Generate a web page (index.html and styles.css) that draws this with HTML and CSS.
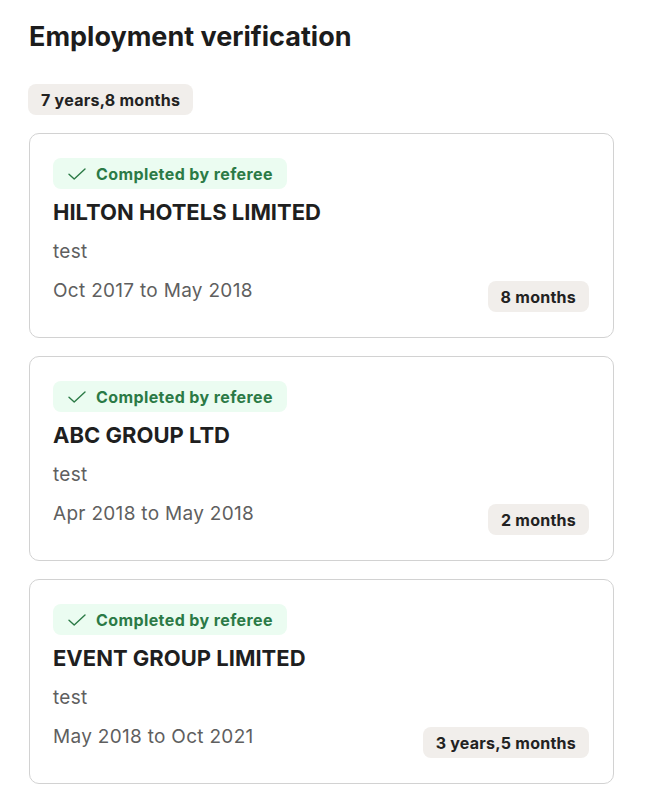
FILE: index.html
```html
<!DOCTYPE html>
<html>
<head>
<meta charset="utf-8">
<link rel="stylesheet" href="styles.css">
</head>
<body>
<main class="page">
  <h1 class="title">Employment verification</h1>
  <div class="total"><span class="badge">7 years,8 months</span></div>
  <div class="cards">
    <section class="card">
      <div class="status"><svg class="check" viewBox="0 0 18 12" width="18" height="12"><path d="M1 6.2 L6.2 11 L17 1" fill="none" stroke="#2b7a46" stroke-width="1.4" stroke-linecap="round" stroke-linejoin="round"/></svg>Completed by referee</div>
      <h2 class="company">HILTON HOTELS LIMITED</h2>
      <p class="role">test</p>
      <div class="row"><span class="dates">Oct 2017 to May 2018</span><span class="badge">8 months</span></div>
    </section>
    <section class="card">
      <div class="status"><svg class="check" viewBox="0 0 18 12" width="18" height="12"><path d="M1 6.2 L6.2 11 L17 1" fill="none" stroke="#2b7a46" stroke-width="1.4" stroke-linecap="round" stroke-linejoin="round"/></svg>Completed by referee</div>
      <h2 class="company">ABC GROUP LTD</h2>
      <p class="role">test</p>
      <div class="row"><span class="dates">Apr 2018 to May 2018</span><span class="badge">2 months</span></div>
    </section>
    <section class="card">
      <div class="status"><svg class="check" viewBox="0 0 18 12" width="18" height="12"><path d="M1 6.2 L6.2 11 L17 1" fill="none" stroke="#2b7a46" stroke-width="1.4" stroke-linecap="round" stroke-linejoin="round"/></svg>Completed by referee</div>
      <h2 class="company">EVENT GROUP LIMITED</h2>
      <p class="role">test</p>
      <div class="row"><span class="dates">May 2018 to Oct 2021</span><span class="badge">3 years,5 months</span></div>
    </section>
  </div>
</main>
</body>
</html>
```

FILE: styles.css
```css
* { box-sizing: border-box; }
html, body { margin: 0; padding: 0; background: #fff; }
body {
  font-family: Inter, "Noto Sans", "Liberation Sans", sans-serif;
  color: #222;
}
.page {
  padding: 18px 32px 0 29px;
  display: flex;
  flex-direction: column;
}
.title {
  margin: 0;
  font-size: 27px;
  line-height: 38px;
  font-weight: 700;
  letter-spacing: 0;
  color: #1c1c1c;
}
.total {
  margin-top: 28px;
  display: flex;
}
.total .badge { margin-left: -1px; }
.badge {
  display: inline-flex;
  align-items: center;
  height: 31px;
  padding: 0 13px;
  border-radius: 8px;
  background: #f1eeeb;
  font-size: 16px;
  letter-spacing: 0.25px;
  font-weight: 700;
  color: #222;
  white-space: nowrap;
}
.cards {
  margin-top: 18px;
  display: flex;
  flex-direction: column;
  gap: 18px;
}
.card {
  border: 1px solid #d2d2d2;
  border-radius: 10px;
  padding: 24px 24px 24px 23px;
  display: flex;
  flex-direction: column;
  align-items: flex-start;
  height: 205px;
}
.status {
  display: inline-flex;
  align-items: center;
  gap: 10px;
  height: 31px;
  padding: 0 14px 0 15px;
  border-radius: 8px;
  background: #ebfcf1;
  color: #2b7a46;
  font-size: 16px;
  letter-spacing: 0.4px;
  font-weight: 700;
}
.check { display: block; }
.company {
  margin: 9px 0 0;
  font-size: 22px;
  line-height: 28px;
  font-weight: 700;
  color: #1f1f1f;
}
.role {
  margin: 12px 0 0;
  font-size: 19px;
  line-height: 27px;
  letter-spacing: 0.3px;
  color: #5f5f5f;
}
.row {
  margin-top: 12px;
  align-self: stretch;
  display: flex;
  justify-content: space-between;
  align-items: flex-end;
}
.dates {
  font-size: 19px;
  line-height: 27px;
  letter-spacing: 0.3px;
  color: #5f5f5f;
  margin-bottom: 8px;
}
```
